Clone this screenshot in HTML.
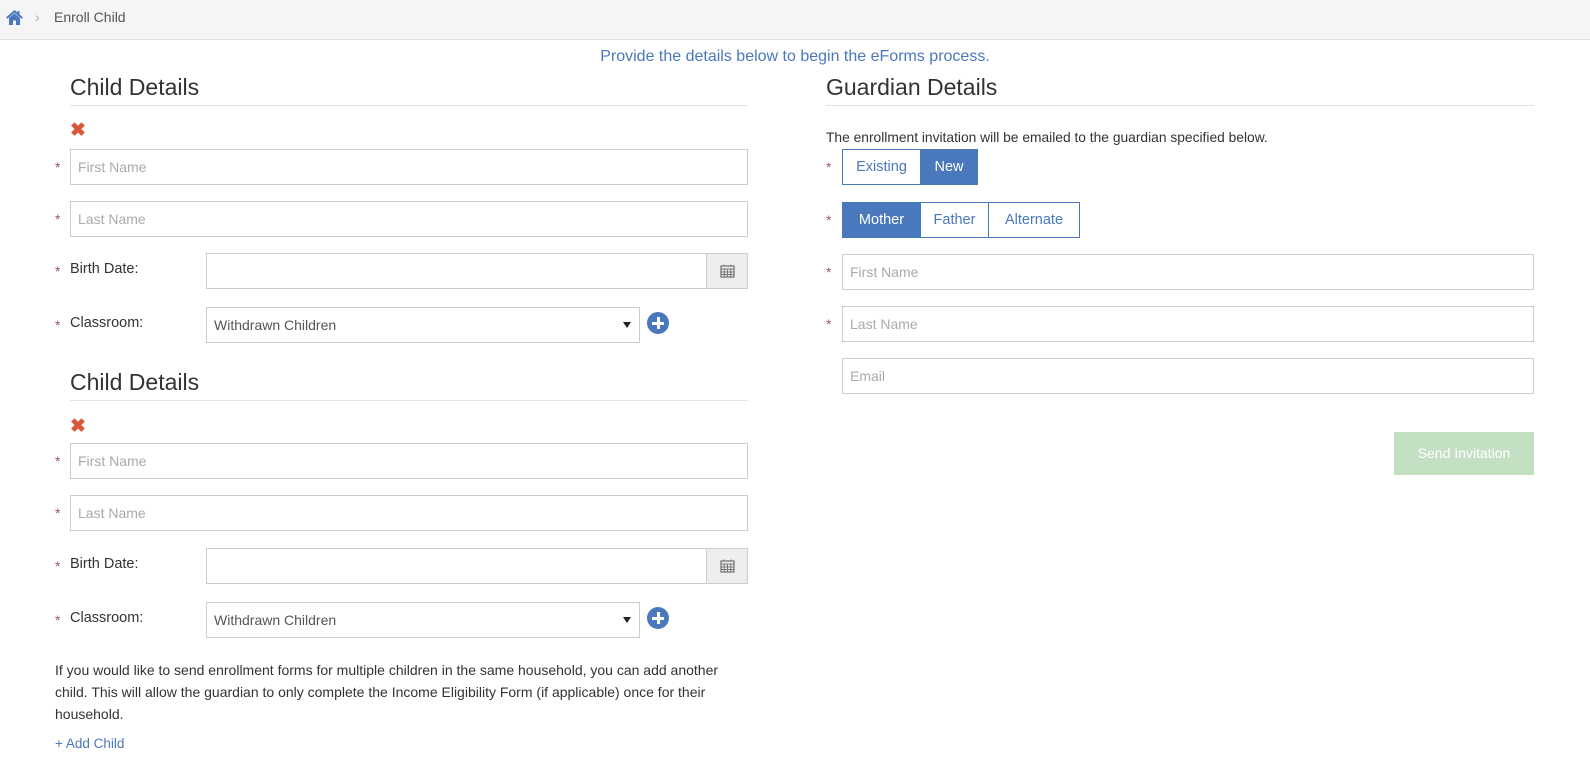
<!DOCTYPE html>
<html><head><meta charset="utf-8"><style>
*{box-sizing:border-box;margin:0;padding:0}
body{width:1590px;height:783px;background:#fff;font-family:"Liberation Sans",sans-serif;color:#333;position:relative;overflow:hidden}
.a{position:absolute}
.bar{left:0;top:0;width:1590px;height:40px;background:#f5f5f5;border-bottom:1px solid #e0e0e0}
.inp{position:absolute;border:1px solid #ccc;background:#fff;height:36px;font-size:14px;color:#aaa;padding:0 7px;line-height:34px}
.star{position:absolute;font-size:14px;color:#9b5a5a}
.h{position:absolute;font-size:23px;color:#333}
.line{position:absolute;height:1px;background:#e3e3e3}
.lbl{position:absolute;font-size:14.5px;color:#333}
.x{position:absolute;color:#d9583b;font-size:19px;font-weight:bold;line-height:1}
.btn{position:absolute;height:36px;border:1px solid #4a78bd;font-size:14.5px;line-height:34px;text-align:center;color:#4a78bd;background:#fff}
.on{background:#4a78bd;color:#fff}
.cal{position:absolute;background:#eee;border-left:1px solid #ccc;top:0;right:0;width:41px;height:34px}
.plus{position:absolute;width:22px;height:22px;border-radius:50%;background:#4a78bd}
.plus:before{content:"";position:absolute;left:5px;top:9.5px;width:12px;height:3px;background:#fff}
.plus:after{content:"";position:absolute;left:9.5px;top:5px;width:3px;height:12px;background:#fff}
.caret{position:absolute;right:8px;top:14px;width:0;height:0;border-left:4px solid transparent;border-right:4px solid transparent;border-top:6px solid #222}
</style></head><body>
<div class="a bar"></div>
<svg class="a" style="left:5px;top:9px" width="19" height="16" viewBox="0 0 19 16"><path d="M9.5 1 L1 8.5 L2.5 9.8 L9.5 3.6 L16.5 9.8 L18 8.5 L14.5 5.4 V2 H12.5 V3.6 Z" fill="#4a78bd"/><path d="M4 9 L9.5 4.3 L15 9 V16 H11 V11.5 H8 V16 H4 Z" fill="#4a78bd"/></svg>
<div class="a" style="left:35px;top:9px;font-size:14px;color:#aaa">›</div>
<div class="a" style="left:54px;top:9px;font-size:14px;color:#555">Enroll Child</div>
<div class="a" style="left:0;width:1590px;top:48px;text-align:center;font-size:16px;color:#4a78bd">Provide the details below to begin the eForms process.</div>

<div class="h" style="left:70px;top:74px">Child Details</div>
<div class="line" style="left:70px;top:105px;width:678px"></div>
<div class="x" style="left:70px;top:121px">✖</div>
<div class="star" style="left:55px;top:159px">*</div><div class="inp" style="left:70px;top:149px;width:678px">First Name</div>
<div class="star" style="left:55px;top:211px">*</div><div class="inp" style="left:70px;top:201px;width:678px">Last Name</div>
<div class="star" style="left:55px;top:263px">*</div><div class="lbl" style="left:70px;top:261px">Birth Date:</div>
<div class="inp" style="left:206px;top:253px;width:542px"><div class="cal"><svg style="position:absolute;left:13px;top:9px" width="15" height="15" viewBox="0 0 15 15"><rect x="1" y="3" width="13" height="11" fill="none" stroke="#777" stroke-width="1.3"/><path d="M1 6H14M4 3V1.5M11 3V1.5M1 9H14M1 11.5H14M4.3 6V14M7.5 6V14M10.7 6V14" stroke="#777" stroke-width="1"/></svg></div></div>
<div class="star" style="left:55px;top:317px">*</div><div class="lbl" style="left:70px;top:315px">Classroom:</div>
<div class="inp" style="left:206px;top:307px;width:434px;color:#555">Withdrawn Children<div class="caret"></div></div>
<div class="plus" style="left:647px;top:312px"></div>

<div class="h" style="left:70px;top:369px">Child Details</div>
<div class="line" style="left:70px;top:400px;width:678px"></div>
<div class="x" style="left:70px;top:417px">✖</div>
<div class="star" style="left:55px;top:453px">*</div><div class="inp" style="left:70px;top:443px;width:678px">First Name</div>
<div class="star" style="left:55px;top:505px">*</div><div class="inp" style="left:70px;top:495px;width:678px">Last Name</div>
<div class="star" style="left:55px;top:558px">*</div><div class="lbl" style="left:70px;top:556px">Birth Date:</div>
<div class="inp" style="left:206px;top:548px;width:542px"><div class="cal"><svg style="position:absolute;left:13px;top:9px" width="15" height="15" viewBox="0 0 15 15"><rect x="1" y="3" width="13" height="11" fill="none" stroke="#777" stroke-width="1.3"/><path d="M1 6H14M4 3V1.5M11 3V1.5M1 9H14M1 11.5H14M4.3 6V14M7.5 6V14M10.7 6V14" stroke="#777" stroke-width="1"/></svg></div></div>
<div class="star" style="left:55px;top:612px">*</div><div class="lbl" style="left:70px;top:610px">Classroom:</div>
<div class="inp" style="left:206px;top:602px;width:434px;color:#555">Withdrawn Children<div class="caret"></div></div>
<div class="plus" style="left:647px;top:607px"></div>

<div class="a" style="left:55px;top:659px;white-space:nowrap;font-size:14px;line-height:22px;color:#333">If you would like to send enrollment forms for multiple children in the same household, you can add another<br>child. This will allow the guardian to only complete the Income Eligibility Form (if applicable) once for their<br>household.</div>
<div class="a" style="left:55px;top:736px;font-size:13.5px;color:#4a78bd">+ Add Child</div>

<div class="h" style="left:826px;top:74px">Guardian Details</div>
<div class="line" style="left:826px;top:105px;width:708px"></div>
<div class="a" style="left:826px;top:130px;font-size:13.8px">The enrollment invitation will be emailed to the guardian specified below.</div>
<div class="star" style="left:826px;top:159px">*</div>
<div class="btn" style="left:842px;top:149px;width:79px">Existing</div>
<div class="btn on" style="left:920px;top:149px;width:58px">New</div>
<div class="star" style="left:826px;top:212px">*</div>
<div class="btn on" style="left:842px;top:202px;width:79px">Mother</div>
<div class="btn" style="left:920px;top:202px;width:69px">Father</div>
<div class="btn" style="left:988px;top:202px;width:92px">Alternate</div>
<div class="star" style="left:826px;top:264px">*</div><div class="inp" style="left:842px;top:254px;width:692px">First Name</div>
<div class="star" style="left:826px;top:316px">*</div><div class="inp" style="left:842px;top:306px;width:692px">Last Name</div>
<div class="inp" style="left:842px;top:358px;width:692px">Email</div>
<div class="a" style="left:1394px;top:432px;width:140px;height:43px;background:#c3e0c3;color:#fff;font-size:14px;line-height:43px;text-align:center">Send Invitation</div>
</body></html>
